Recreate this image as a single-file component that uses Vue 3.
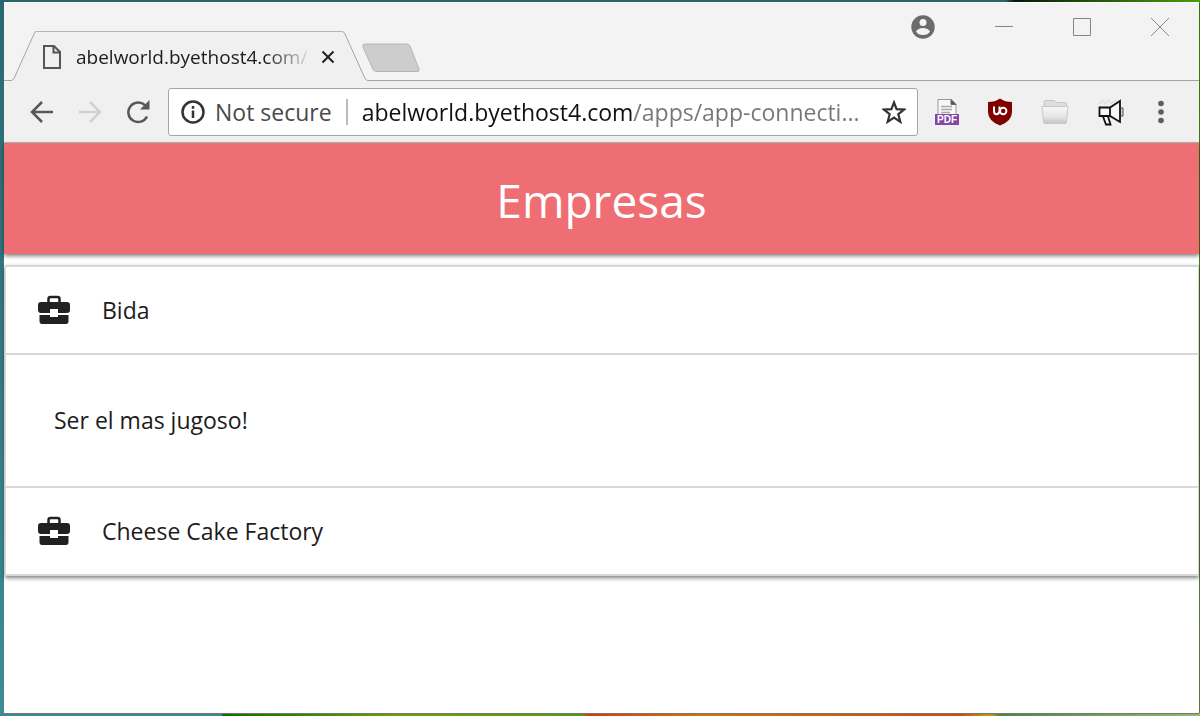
<template>
  <div class="desktop">
    <div class="window">
      <div class="titlebar">
        <svg class="tab-edge" width="32" height="50" viewBox="0 0 32 50">
          <path class="tab-fill" d="M0 50V49.500H7Q9 49.500 10 47.500L30 3Q31 .5 32 .5V50Z" />
          <path class="tab-line" d="M0 49.500H7Q9 49.500 10 47.500L30 3Q31 .5 32 .5" />
        </svg>
        <div class="tab">
          <svg class="tab__page" width="18" height="24" viewBox="0 0 18 24">
            <path d="M1 1H11L17 7V23H1ZM10.500 1V7.500H17" />
          </svg>
          <span class="tab__title">{{ host }}/</span>
          <button class="tab__close" aria-label="Close tab">
            <svg width="14" height="14" viewBox="0 0 14 14"><path d="M1.500 1.500L12.500 12.500M12.500 1.500L1.500 12.500" /></svg>
          </button>
        </div>
        <svg class="tab-edge" width="28" height="50" viewBox="0 0 28 50">
          <path class="tab-fill" d="M0 50V.5Q2 .5 3 3L23 47.500Q24 49.500 26 49.500H28V50Z" />
          <path class="tab-line" d="M0 .5Q2 .5 3 3L23 47.500Q24 49.500 26 49.500H28" />
        </svg>
        <div class="titlebar__rest">
          <button class="new-tab" aria-label="New tab">
            <svg width="60" height="30" viewBox="0 0 60 30">
              <path d="M3 1H44Q47 1 48 3L57 26Q58 28.500 55 28.500H15Q12 28.500 11 26.500L1 4Q0 1 3 1Z" />
            </svg>
          </button>
          <div class="controls">
            <button class="controls__btn" aria-label="Profile">
              <svg width="24" height="24" viewBox="0 0 24 24">
                <circle cx="12" cy="12" r="11.700" fill="#6b6b6b" />
                <circle cx="12" cy="7.500" r="3.500" fill="#f3f3f3" />
                <path d="M5 16.500Q7 13 12 13T19 16.500Q17 20 12 20T5 16.500Z" fill="#f3f3f3" />
              </svg>
            </button>
            <button class="controls__btn" aria-label="Minimize">
              <svg width="18" height="18" viewBox="0 0 18 18"><path d="M0 8.500H18" /></svg>
            </button>
            <button class="controls__btn" aria-label="Maximize">
              <svg width="18" height="18" viewBox="0 0 18 18"><path d="M.5 .5H17.500V17.500H.5Z" /></svg>
            </button>
            <button class="controls__btn" aria-label="Close window">
              <svg width="18" height="18" viewBox="0 0 18 18"><path d="M0 0L18 18M18 0L0 18" /></svg>
            </button>
          </div>
        </div>
      </div>

      <div class="toolbar">
        <div class="nav">
          <button class="nav__btn" aria-label="Back">
            <svg width="24" height="24" viewBox="0 0 24 24"><path d="M23 12H2M12 2L2 12L12 22" /></svg>
          </button>
          <button class="nav__btn" aria-label="Forward" disabled>
            <svg width="24" height="24" viewBox="0 0 24 24"><path d="M1 12H22M12 2L22 12L12 22" /></svg>
          </button>
          <button class="nav__btn" aria-label="Reload">
            <svg width="24" height="24" viewBox="0 0 24 24">
              <path d="M21 16.500A9.800 9.800 0 1 1 19 5.200" />
              <path class="nav__head" d="M23.500 0V9.500H14Z" />
            </svg>
          </button>
        </div>

        <div class="address">
          <svg class="address__info" width="24" height="24" viewBox="0 0 24 24">
            <circle cx="12" cy="12" r="10.500" />
            <path d="M12 10.500V18M12 6V8.800" />
          </svg>
          <label class="address__label" for="url">Not secure</label>
          <input id="url" v-model="url" class="address__input" type="text" spellcheck="false" />
          <button class="address__star" aria-label="Bookmark">
            <svg width="24" height="24" viewBox="0 0 24 24">
              <path d="M12 2.500L14.600 9.200L22 9.600L16.300 14.200L18.300 21.800L12 17.600L5.700 21.800L7.700 14.200L2 9.600L9.400 9.200Z" />
            </svg>
          </button>
        </div>

        <div class="extensions">
          <button class="ext" aria-label="PDF">
            <svg width="24" height="28" viewBox="0 0 24 28">
              <path d="M3 17V1.500H16L21 6.500V17" fill="#f7f7f7" stroke="#999" />
              <path d="M16 1.500V6.500H21Z" fill="#555" stroke="#666" />
              <path d="M6 8.500H17M6 11.500H17M6 14.500H15" stroke="#aaa" stroke-width="1.500" />
              <rect y="16" width="24" height="11" fill="#8547a6" />
              <text x="12" y="25" text-anchor="middle" class="ext__pdf">PDF</text>
            </svg>
          </button>
          <button class="ext" aria-label="uBlock Origin">
            <svg width="24" height="28" viewBox="0 0 24 28">
              <path d="M12 .5Q17 4 24 4V14Q24 23 12 27.500Q0 23 0 14V4Q7 4 12 .5Z" fill="#800000" />
              <path d="M6 8.500V13Q6 16.200 8.500 16.200T11.500 13V8.500" fill="none" stroke="#fff" stroke-width="2" />
              <circle cx="15.200" cy="13" r="3.200" fill="none" stroke="#fff" stroke-width="2" />
            </svg>
          </button>
          <button class="ext" aria-label="Folder">
            <svg width="28" height="26" viewBox="0 0 28 26">
              <defs>
                <linearGradient id="folder" x1="0" y1="0" x2="0" y2="1">
                  <stop offset="0" stop-color="#f7f7f7" />
                  <stop offset=".6" stop-color="#e6e6e6" />
                  <stop offset="1" stop-color="#c4c4c4" />
                </linearGradient>
              </defs>
              <path d="M3 8V3Q3 1.500 5 1.500H12Q14 1.500 15 3.500H24Q25.500 3.500 25.500 5V8" fill="#dedede" stroke="#c6c6c6" />
              <path d="M1 7.500H27L25.500 23Q25.500 24.500 24 24.500H4Q2.500 24.500 2.500 23Z" fill="url(#folder)" stroke="#c9c9c9" />
            </svg>
          </button>
          <button class="ext" aria-label="Announcements">
            <svg width="26" height="28" viewBox="0 0 26 28">
              <path d="M1 6L6 2M6 6L12 2M12 6L18 2" stroke="#ddd" stroke-width="1.500" />
              <path d="M22.500 10H25V18H22.500" fill="#ccc" stroke="#555" />
              <path d="M1.500 9.500H12L22 3V24L12 18H1.500ZM12 9.500V18M5 18.500L8 26.500H12.500L10 18.500" fill="#f7f7f7" stroke="#111" stroke-width="1.800" />
            </svg>
          </button>
          <button class="ext ext--menu" aria-label="Menu">
            <svg width="8" height="24" viewBox="0 0 8 24" fill="#5a5d61">
              <circle cx="4" cy="3.500" r="2.800" />
              <circle cx="4" cy="12" r="2.800" />
              <circle cx="4" cy="20.500" r="2.800" />
            </svg>
          </button>
        </div>
      </div>

      <main class="page">
        <header class="page__header">
          <h1>Empresas</h1>
        </header>
        <ul class="collapsible">
          <li v-for="company in companies" :key="company.name">
            <button class="collapsible__header" :aria-expanded="company.open" @click="company.open = !company.open">
              <svg width="32" height="30" viewBox="0 0 32 30">
                <path d="M10.500 8V4Q10.500 2 12.500 2H19.500Q21.500 2 21.500 4V8" fill="none" stroke="#212121" stroke-width="2.500" />
                <path d="M3 7H29Q32 7 32 10V15Q32 18 29 18H20V14H12V18H3Q0 18 0 15V10Q0 7 3 7ZM1.500 20H12V22H20V20H30.500V26Q30.500 29 28 29H4Q1.500 29 1.500 26Z" fill="#212121" />
              </svg>
              <span>{{ company.name }}</span>
            </button>
            <div v-if="company.open" class="collapsible__body">
              <p>{{ company.motto }}</p>
            </div>
          </li>
        </ul>
      </main>
    </div>
  </div>
</template>

<script setup>
import { ref } from 'vue';

const host = 'abelworld.byethost4.com';
const url = ref(`${host}/apps/app-connecti...`);

const companies = ref([
  { name: 'Bida', motto: 'Ser el mas jugoso!', open: true },
  { name: 'Cheese Cake Factory', motto: '', open: false }
]);
</script>

<style>
body {
  margin: 0;
}
</style>

<style scoped>
.desktop {
  box-sizing: border-box;
  display: flex;
  min-height: 100vh;
  padding: 2px 1px 2px 4px;
  background:
    linear-gradient(90deg, #3c8891 222px, #087000 222px, #70a000 400px, #579713 580px, #d33d0c 590px, #d27408 700px, #cf4a09 960px, #c49a0c 990px, #4d8546 1000px, #94b96c) bottom / 100% 3px no-repeat,
    linear-gradient(90deg, #28666f 1005px, #0a1408 1015px, #153d08 1060px, #4d9c0a) top / 100% 3px no-repeat,
    linear-gradient(#3c7100, #577b3a) right / 1px 100% no-repeat,
    linear-gradient(#296873, #3f8c94);
  font-family: "Open Sans", "Noto Sans", sans-serif;
  color: #1c1c1c;
}

button {
  display: flex;
  align-items: center;
  justify-content: center;
  padding: 0;
  border: none;
  background: none;
  font: inherit;
  color: inherit;
  cursor: pointer;
}

.window {
  flex: 1;
  display: flex;
  flex-direction: column;
  min-width: 0;
  border-top: 1px solid #fff;
  border-bottom: 1px solid #777;
  background: #fff;
}

.titlebar {
  display: flex;
  align-items: flex-end;
  height: 78px;
  background: #f3f3f3;
}

.tab-edge {
  flex: none;
}

.tab-fill {
  fill: #f0f0f0;
}

.tab-line {
  fill: none;
  stroke: #a5a5a5;
}

.tab {
  box-sizing: border-box;
  display: flex;
  align-items: center;
  width: 306px;
  height: 50px;
  padding: 0 7px;
  border-top: 1px solid #b5b5b5;
  background: #f0f0f0;
}

.tab__page {
  flex: none;
  margin-right: 15px;
  fill: none;
  stroke: #555;
  stroke-width: 2;
}

.tab__title {
  flex: 1;
  white-space: nowrap;
  font-size: 19px;
  line-height: 28px;
  mask-image: linear-gradient(90deg, #000 190px, transparent 236px);
}

.tab__close {
  flex: none;
  margin-left: 8px;
}

.tab__close svg {
  stroke: #222;
  stroke-width: 2;
}

.titlebar__rest {
  box-sizing: border-box;
  flex: 1;
  display: flex;
  justify-content: space-between;
  height: 78px;
  padding-right: 30px;
  border-bottom: 1px solid #a5a5a5;
}

.new-tab {
  align-self: flex-end;
  margin: 0 0 7px -8px;
}

.new-tab path {
  fill: #cdcdcd;
  stroke: #b5b5b5;
}

.controls {
  display: flex;
  align-self: flex-start;
  align-items: center;
  gap: 60px;
  margin-top: 12px;
}

.controls__btn path:not([fill]) {
  fill: none;
  stroke: #858585;
}

.toolbar {
  display: flex;
  align-items: center;
  height: 61px;
  border-bottom: 1px solid #b3b8bc;
  background: #f0f0f0;
}

.nav {
  display: flex;
  gap: 24px;
  padding: 0 18px 0 26px;
}

.nav__btn svg {
  fill: none;
  stroke: #55585c;
  stroke-width: 2.5;
}

.nav__btn:disabled svg {
  stroke: #d0d1d2;
}

.nav__btn .nav__head {
  fill: #55585c;
  stroke: none;
}

.address {
  box-sizing: border-box;
  flex: 1;
  display: flex;
  align-items: center;
  min-width: 0;
  height: 48px;
  padding: 0 11px 0 12px;
  border: 1px solid #a5a5a5;
  border-radius: 3px;
  background: #fff;
  font-size: 23px;
  line-height: 32px;
}

.address__info {
  flex: none;
  margin-right: 10px;
  fill: none;
  stroke: #333;
  stroke-width: 2.5;
}

.address__label {
  flex: none;
  padding-right: 16px;
  background: linear-gradient(#bbb, #bbb) right / 2px 26px no-repeat;
  color: #4a4a4a;
}

/* the host is dark, the path after it is grey */
.address__input {
  flex: 1;
  min-width: 0;
  height: 32px;
  padding: 0 0 0 14px;
  border: none;
  outline: none;
  background: linear-gradient(90deg, #111 286px, #777 286px);
  background-clip: text;
  color: transparent;
  caret-color: #111;
  font: inherit;
}

.address__star svg {
  fill: none;
  stroke: #333;
  stroke-width: 2.2;
}

.extensions {
  display: flex;
  align-items: center;
  gap: 29px;
  padding: 0 30px 0 17px;
}

.ext {
  flex: none;
}

.ext--menu {
  width: 16px;
}

.ext__pdf {
  fill: #fff;
  font: bold 10px "Liberation Sans", sans-serif;
}

.page {
  flex: 1;
  background: #fff;
}

.page__header {
  position: relative;
  padding-top: 4px;
  background: #ee6e73;
  color: #fff;
  text-align: center;
  box-shadow: 0 2px 4px rgba(0, 0, 0, 0.5);
}

.page__header h1 {
  margin: 0;
  font-size: 46px;
  font-weight: 400;
  line-height: 107px;
}

.collapsible {
  margin: 11px 0 0 1px;
  padding: 0;
  border: solid #d8d8d8;
  border-width: 2px 1px 0;
  list-style: none;
  font-size: 23px;
  line-height: 35px;
  box-shadow: 0 2px 4px rgba(0, 0, 0, 0.5);
}

.collapsible__header {
  justify-content: flex-start;
  gap: 32px;
  width: 100%;
  height: 88px;
  padding: 0 32px;
  border-bottom: 2px solid #d8d8d8;
  background: #fff;
}

.collapsible__body {
  padding: 48px;
  border-bottom: 2px solid #d8d8d8;
}

.collapsible__body p {
  margin: 0;
}
</style>
